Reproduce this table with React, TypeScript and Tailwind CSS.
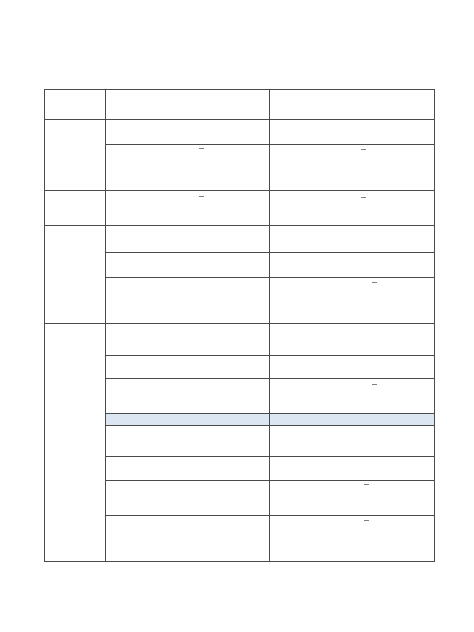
import React from "react";

const B = "border-r border-b border-[#4a4a4a]";

function Dash({ ml, mt }: { ml: string; mt: string }) {
  return <div className={`h-px w-[5px] bg-[#808080] ${ml} ${mt}`} />;
}

export default function App() {
  return (
    <div className="min-h-[632px] w-[474px] bg-white" style={{ fontFamily: '"Liberation Sans", Arial, sans-serif' }}>
      <div className="pt-[89px] pl-[44px]">
        <div className="grid w-fit grid-cols-[61px_164px_165px] grid-rows-[30px_25px_46px_35px_27px_25px_46px_32px_23px_35px_12px_31px_24px_35px_46px] border-t border-l border-[#4a4a4a]">
          {/* row 1 header */}
          <div className={B} />
          <div className={B} />
          <div className={B} />
          {/* group 1 */}
          <div className={`${B} row-span-2`} />
          <div className={B} />
          <div className={B} />
          <div className={B}>
            <Dash ml="ml-[93px]" mt="mt-[3px]" />
          </div>
          <div className={B}>
            <Dash ml="ml-[91px]" mt="mt-[4px]" />
          </div>
          {/* group 2 */}
          <div className={B} />
          <div className={B}>
            <Dash ml="ml-[93px]" mt="mt-[5px]" />
          </div>
          <div className={B}>
            <Dash ml="ml-[91px]" mt="mt-[6px]" />
          </div>
          {/* group 3 */}
          <div className={`${B} row-span-3`} />
          <div className={B} />
          <div className={B} />
          <div className={B} />
          <div className={B} />
          <div className={B} />
          <div className={B}>
            <Dash ml="ml-[102px]" mt="mt-[4px]" />
          </div>
          {/* group 4 */}
          <div className={`${B} row-span-8`} />
          <div className={B} />
          <div className={B} />
          <div className={B} />
          <div className={B} />
          <div className={B} />
          <div className={B}>
            <Dash ml="ml-[102px]" mt="mt-[5px]" />
          </div>
          <div className={`${B} bg-[#dce6f2]`} />
          <div className={`${B} bg-[#dce6f2]`} />
          <div className={B} />
          <div className={B} />
          <div className={B} />
          <div className={B} />
          <div className={B} />
          <div className={B}>
            <Dash ml="ml-[94px]" mt="mt-[3px]" />
          </div>
          <div className={B} />
          <div className={B}>
            <Dash ml="ml-[94px]" mt="mt-[4px]" />
          </div>
        </div>
      </div>
    </div>
  );
}
